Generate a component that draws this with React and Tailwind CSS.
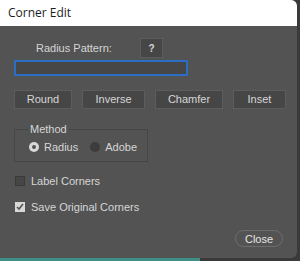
import { useState } from 'react';

const Btn = ({ children, className = '' }) => (
    <button className={`h-[19px] bg-[#464646] border border-[#5c5c5c] text-[#d6d6d6] text-[11px] ${className}`}>
        {children}
    </button>
);

const App = () => {
    const [method, setMethod] = useState('radius');
    const [label, setLabel] = useState(false);
    const [save, setSave] = useState(true);

    return (
        <div className="w-[300px] h-[261px] bg-[#3a3a3a] overflow-hidden relative" style={{ fontFamily: '"Liberation Sans", Arial, sans-serif' }}>
            {/* desktop peeking out at the bottom */}
            <div className="absolute left-0 bottom-0 w-[200px] h-[3px] bg-[#3f8f88]" />
            <div className="relative w-[297px] h-[258px] rounded-tr-[6px] rounded-br-[6px] overflow-hidden flex flex-col bg-[#535353]">
                {/* title bar */}
                <div className="h-[26px] bg-white flex items-center pl-[8px] text-[12px] text-[#1c1c1c] shrink-0" style={{ fontFamily: '"Open Sans", sans-serif' }}>
                    Corner Edit
                </div>

                <div className="relative flex-1 text-[#d6d6d6] text-[11px]">
                    {/* radius pattern */}
                    <div className="flex items-center mt-[12px] pl-[36px]">
                        <span className="w-[104px]">Radius Pattern:</span>
                        <span className="w-[23px] h-[20px] bg-[#464646] border border-[#5c5c5c] flex items-center justify-center font-bold text-[10px]">?</span>
                    </div>
                    <div className="ml-[14px] mt-[2px] w-[174px] h-[16px] bg-[#474747] border-2 border-[#2a6fc4]" />

                    {/* buttons */}
                    <div className="flex gap-[10px] ml-[14px] mt-[14px]">
                        <Btn className="w-[58px]">Round</Btn>
                        <Btn className="w-[63px]">Inverse</Btn>
                        <Btn className="w-[68px]">Chamfer</Btn>
                        <Btn className="w-[53px]">Inset</Btn>
                    </div>

                    {/* method */}
                    <fieldset className="ml-[14px] mt-[15px] w-[134px] h-[38px] border border-[#464646] pl-[14px]">
                        <legend className="px-[2px] -ml-[1px] text-[11px] leading-[11px]">Method</legend>
                        <div className="flex items-center gap-[12px] mt-[4px]">
                            <label className="flex items-center gap-[5px]" onClick={() => setMethod('radius')}>
                                <span className="w-[10px] h-[10px] rounded-full bg-[#d8d8d8] flex items-center justify-center">
                                    {method === 'radius' && <span className="w-[4px] h-[4px] rounded-full bg-[#535353]" />}
                                </span>
                                Radius
                            </label>
                            <label className="flex items-center gap-[5px]" onClick={() => setMethod('adobe')}>
                                <span className="w-[10px] h-[10px] rounded-full bg-[#3c3c3c] flex items-center justify-center">
                                    {method === 'adobe' && <span className="w-[4px] h-[4px] rounded-full bg-[#d8d8d8]" />}
                                </span>
                                Adobe
                            </label>
                        </div>
                    </fieldset>

                    {/* checkboxes */}
                    <label className="flex items-center gap-[6px] ml-[15px] mt-[11px]" onClick={() => setLabel(!label)}>
                        <span className="w-[10px] h-[10px] bg-[#464646] border border-[#3a3a3a]" />
                        Label Corners
                    </label>
                    <label className="flex items-center gap-[6px] ml-[15px] mt-[9px]" onClick={() => setSave(!save)}>
                        <span className="w-[10px] h-[10px] bg-[#d8d8d8] flex items-center justify-center">
                            {save && (
                                <svg width="8" height="8" viewBox="0 0 8 8"><path d="M1 4l2 2 4-5" stroke="#535353" strokeWidth="1.6" fill="none" /></svg>
                            )}
                        </span>
                        Save Original Corners
                    </label>

                    <button className="absolute right-[14px] bottom-[11px] w-[48px] h-[17px] rounded-full border border-[#6e6e6e] text-[#e6e6e6] text-[11px]">
                        Close
                    </button>
                </div>
            </div>
        </div>
    );
};

export default App;
